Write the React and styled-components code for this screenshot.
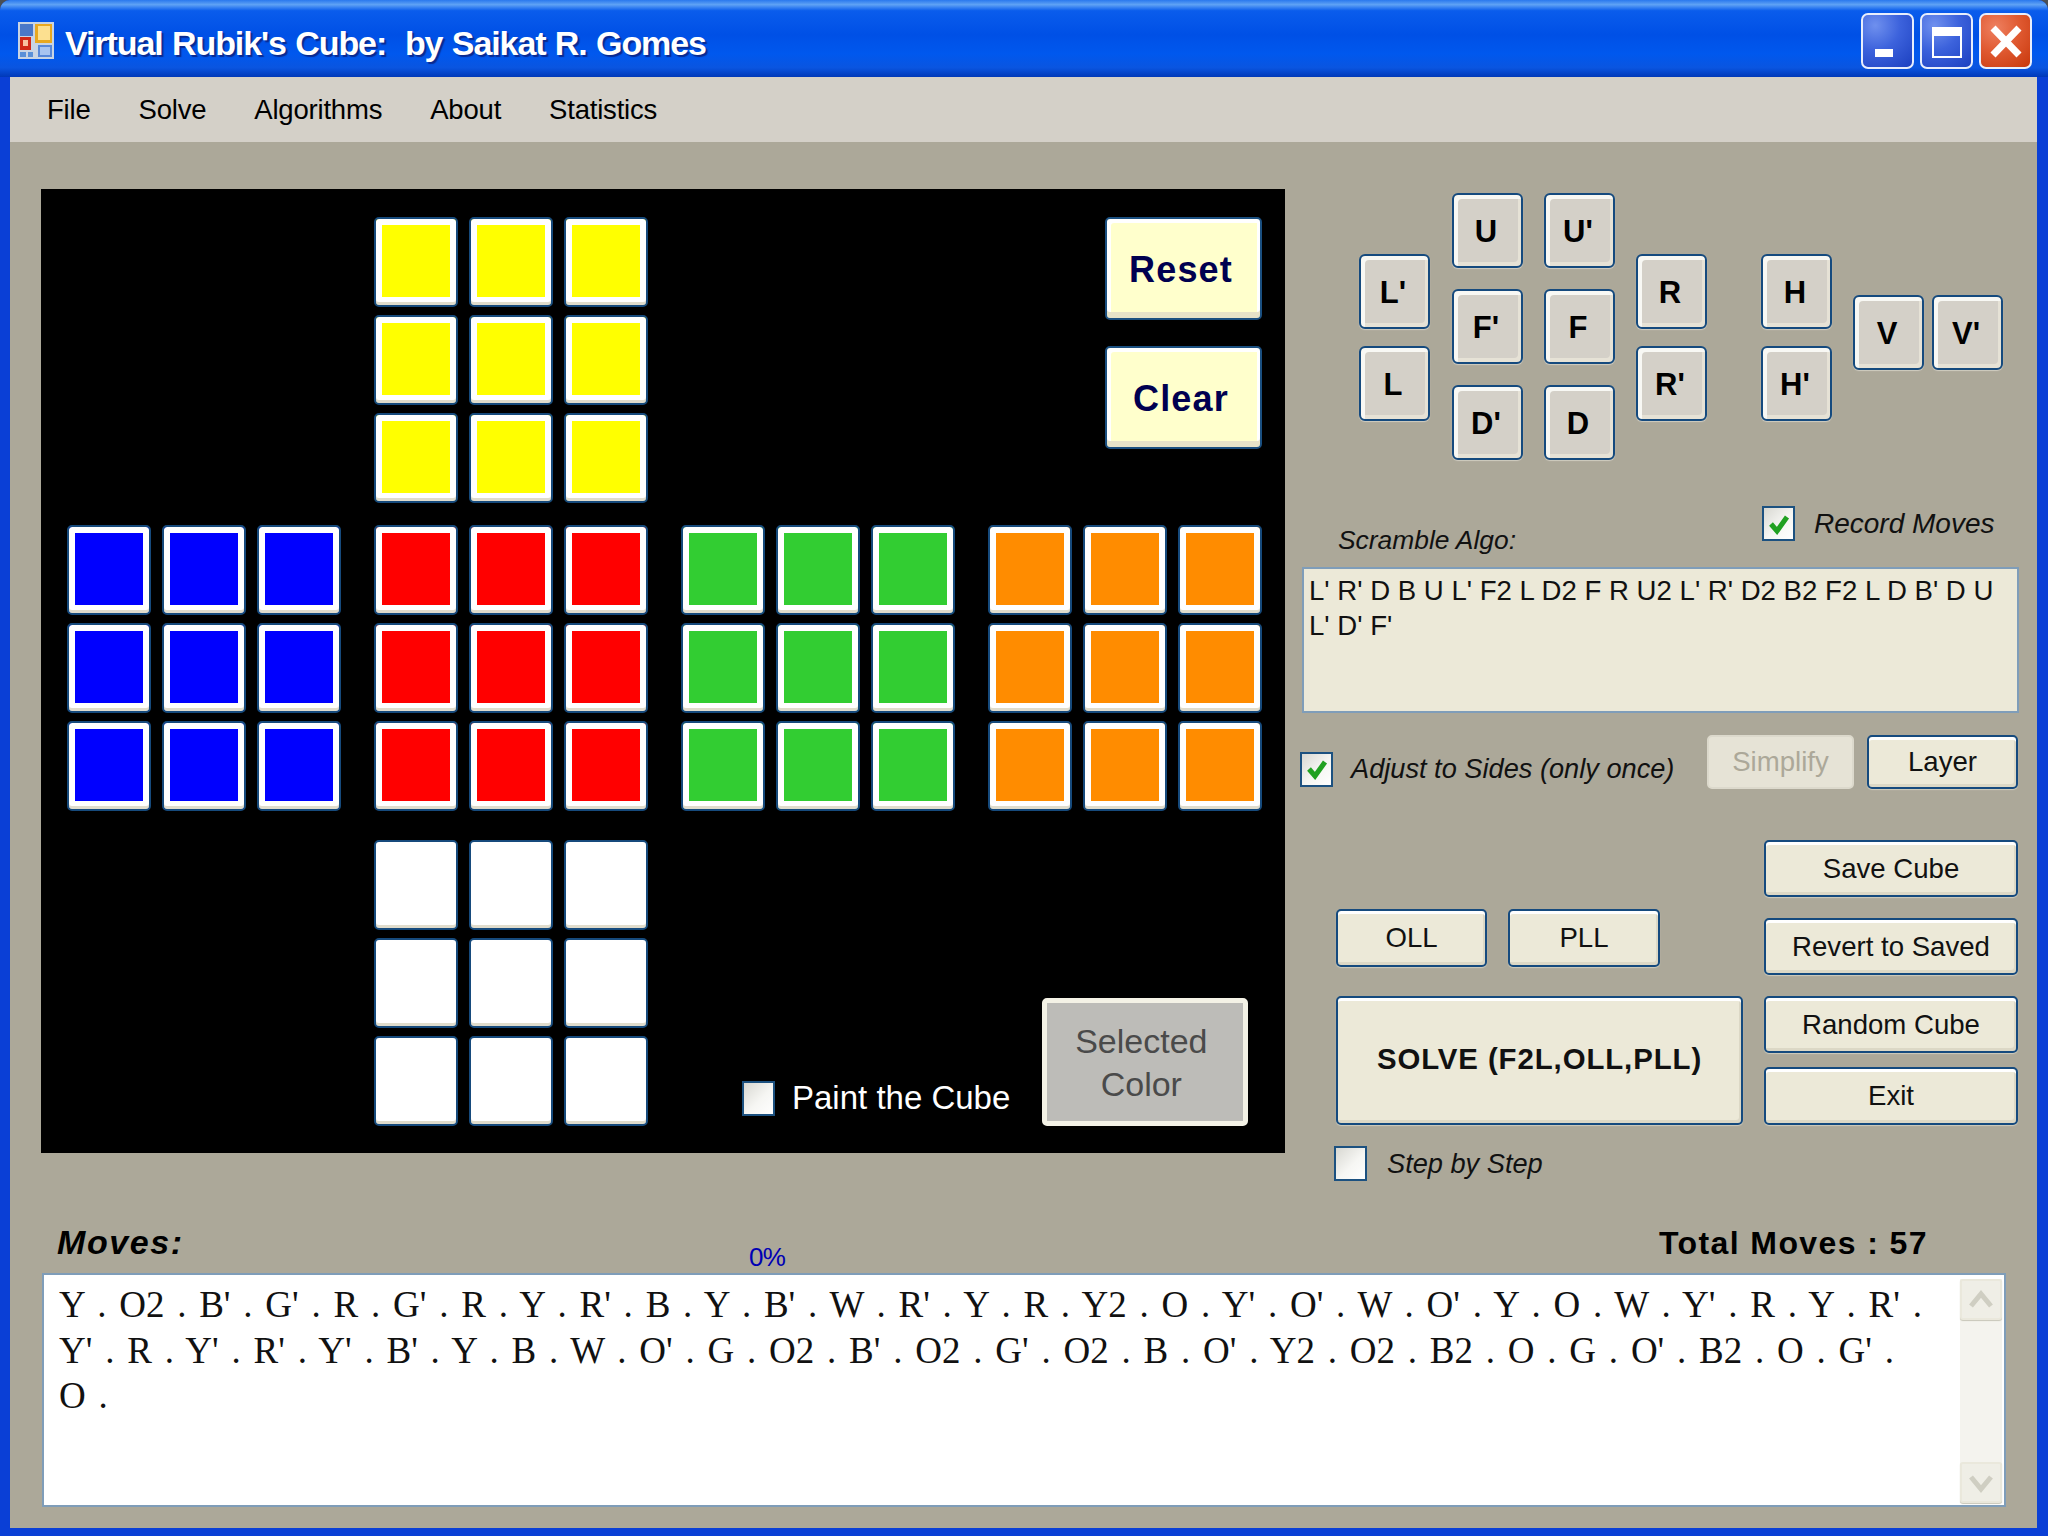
import React from 'react';
import styled, { createGlobalStyle } from 'styled-components';

const Global = createGlobalStyle`
  html, body { margin: 0; padding: 0; background: #4a4f55; }
  * { box-sizing: border-box; }
`;
const sans = `"Liberation Sans", Arial, sans-serif`;
const serif = `"Liberation Serif", "Times New Roman", serif`;

const Win = styled.div`
  width: 2048px; height: 1536px; overflow: hidden;
  display: flex; flex-direction: column;
  background: #0a3fd6; border-radius: 10px 10px 0 0;
  font-family: ${sans}; color: #000;
`;
const TitleBar = styled.div`
  height: 77px; flex: none; display: flex; align-items: center;
  padding: 0 16px 0 18px;
  background: linear-gradient(180deg, #2a78ee 0%, #5fa2f5 6%, #0a5cec 14%, #0050e6 45%, #0058ee 70%, #0a55e0 88%, #0038b8 100%);
`;
const TitleIcon = styled.svg`
  width: 36px; height: 37px; flex: none; margin-top: 3px;
`;
const TitleText = styled.div`
  margin-left: 11px; flex: 1; padding-top: 9px; font-size: 34px; font-weight: 700; color: #fff;
  letter-spacing: -1.08px; word-spacing: 1px; white-space: pre; text-shadow: 2px 2px 1px #0a2a90;
`;
const WinBtns = styled.div`
  display: flex; gap: 6px; margin-top: 5px; margin-right: 0;
`;
const WinBtn = styled.button`
  width: 53px; height: 56px; padding: 0; display: flex; align-items: center; justify-content: center;
  border: 2px solid #e8eefc; border-radius: 7px;
  background: ${p => p.$close
    ? 'radial-gradient(circle at 30% 25%, #ee8060 0%, #e05a32 45%, #c8380c 100%)'
    : 'radial-gradient(circle at 25% 20%, #6f90ee 0%, #3c62dc 45%, #1c40c0 100%)'};
`;
const Client = styled.div`
  flex: 1; margin: 0 11px 8px 10px; display: flex; flex-direction: column;
  background: #aca899;
`;
const MenuBar = styled.nav`
  height: 65px; flex: none; display: flex; align-items: center; gap: 48px;
  padding: 0 0 0 37px; background: #d4d0c8; font-size: 27.5px; letter-spacing: -0.2px;
`;
const Main = styled.div`
  height: 1084px; flex: none; display: flex; padding: 47px 0 0 31px;
`;
const CubePanel = styled.div`
  width: 1244px; height: 964px; flex: none; background: #000;
  padding: 28px 0 0 26px;
`;
const Net = styled.div`
  display: grid;
  grid-template-columns: 273px 273px 273px 274px;
  column-gap: 34px;
  grid-template-rows: 287px 288px 288px;
  row-gap: 21px;
`;
const Face = styled.div`
  display: grid; grid-template-columns: repeat(3, 84px); grid-auto-rows: 90px;
  column-gap: 11px; row-gap: 8px; grid-column: ${p => p.$col}; grid-row: ${p => p.$row};
  margin-top: ${p => p.$row === 3 ? 6 : 0}px;
`;
const Tile = styled.button`
  padding: 0; border: 2px solid #164a7c; border-radius: 5px; background: ${p => p.$color};
  box-shadow: inset 0 -3px 0 #e0dccc, inset 0 0 0 6px #fff, inset 0 -8px 0 #fff;
`;
const ActionStack = styled.div`
  grid-column: 4; grid-row: 1; display: flex; flex-direction: column; align-items: flex-end; gap: 26px;
`;
const YellowBtn = styled.button`
  width: 157px; height: 103px; padding: 3px 5px 0 0; border: 2px solid #1a4f80; border-radius: 5px;
  background: #ffffcc; color: #000050; font: 700 36px ${sans}; letter-spacing: 1.2px;
  box-shadow: inset 0 -6px 0 #e6e2c8, inset 4px 4px 0 #fff, inset -3px 0 0 #fff;
`;
const PaintArea = styled.div`
  grid-column: 3 / 5; grid-row: 3; display: flex; align-items: flex-end;
  margin: 33px 0 -4px 61px;
`;
const PaintCheck = styled.label`
  display: flex; align-items: center; gap: 17px; color: #fff; font-size: 33px; margin-bottom: 9px;
  white-space: nowrap;
`;
const Swatch = styled.div`
  width: 206px; height: 128px; margin-left: 32px; flex: none;
  display: flex; align-items: center; justify-content: center; text-align: center;
  background: #bdbcb8; border: 5px solid #f4f2e6; border-radius: 5px;
  color: #4a4a4a; font-size: 34px; line-height: 43px; padding: 2px 8px 0 0;
`;
const Box = styled.span`
  width: 33px; height: 35px; flex: none; display: flex; align-items: center; justify-content: center;
  border: 2px solid #1c5180;
  background: linear-gradient(135deg, #d8d8d2 0%, #f6f6f3 55%, #ffffff 100%);
`;
const Side = styled.div`
  flex: 1; display: flex; flex-direction: column; padding-top: 4px;
`;
const Pad = styled.div`
  display: flex; height: 269px; padding-left: 74px; flex: none;
`;
const KeyCol = styled.div`
  display: flex; flex-direction: column;
  margin-top: ${p => p.$top || 0}px; margin-left: ${p => p.$left || 0}px;
  gap: ${p => p.$gap || 0}px;
`;
const Key = styled.button`
  width: 71px; height: 75px; padding: 3px 3px 0 0; border: 2px solid #154a7e; border-radius: 6px;
  background: #d4d0c8; font: 700 31px ${sans}; color: #000;
  box-shadow: inset 4px 4px 0 #f8f8f4, inset -3px -4px 0 #e6e2d6, 0 1px 1px #d0ccc0;
`;
const ScrambleRow = styled.div`
  display: flex; height: 61px; flex: none; margin-top: 44px; padding-left: 53px;
`;
const ScrambleLabel = styled.div`
  width: 424px; flex: none; margin-top: 19px; font-style: italic; font-size: 26.4px; line-height: 30px;
  color: #111;
`;
const ItalicCheck = styled.label`
  display: flex; align-items: center; gap: ${p => p.$gap || 19}px; font-style: italic;
  font-size: ${p => p.$size || 27.2}px;
  color: #111; white-space: nowrap; height: 35px;
`;
const AlgoBox = styled.div`
  width: 717px; height: 146px; flex: none; margin-left: 17px; padding: 4px 5px;
  background: #ece9d8; border: 2px solid #7f9db9; font-size: 27.6px; line-height: 35px; color: #111;
`;
const OptionsRow = styled.div`
  display: flex; align-items: center; margin-top: 22px; margin-left: 15px; height: 54px; flex: none;
`;
const AdjustWrap = styled.div`
  width: 407px; flex: none; padding-top: 14px; display: flex;
`;
const Btn = styled.button`
  width: ${p => p.$w}px; height: ${p => p.$h || 57}px; flex: none;
  padding: 0 0 ${p => p.$bold ? 3 : 0}px;
  margin-left: ${p => p.$ml || 0}px;
  border: 2px solid #154a7e; border-radius: 5px; background: #ece9d8;
  font: ${p => p.$bold ? 700 : 400} ${p => p.$bold ? 29.4 : 27.6}px ${sans}; color: #111;
  letter-spacing: ${p => p.$bold ? 0.9 : 0}px;
  box-shadow: inset 0 3px 0 #fff, inset -2px -3px 0 #dcd8c6, 0 1px 1px #cfcbbc;
  white-space: nowrap;
`;
const DisabledBtn = styled(Btn)`
  border-color: #dcd9cc; color: #aca899; background: #e6e3d6;
  box-shadow: none;
`;
const Lower = styled.div`
  display: flex; margin-top: 51px; margin-left: 51px; flex: none;
`;
const LeftCol = styled.div`
  width: 428px; flex: none; display: flex; flex-direction: column; padding-top: 69px;
`;
const PairRow = styled.div`
  display: flex; gap: 21px; margin-bottom: 29px;
`;
const StepWrap = styled.div`
  margin-top: 21px; margin-left: -2px;
`;
const RightCol = styled.div`
  display: flex; flex-direction: column;
`;
const RightBtn = styled(Btn)`
  margin-bottom: ${p => p.$mb || 0}px;
`;
const Bottom = styled.div`
  flex: 1; padding: 0 0 0 32px; display: flex; flex-direction: column;
`;
const MovesHeader = styled.div`
  height: 47px; flex: none; display: flex;
`;
const MovesTitle = styled.div`
  width: 126px; flex: none; padding: 0 0 0 15px; white-space: nowrap;
  font: italic 700 34px/32px ${sans}; letter-spacing: 1.6px;
`;
const Percent = styled.div`
  margin-left: 581px; margin-top: 17px; color: #0000b4; font-size: 26px; line-height: 28px; letter-spacing: -0.8px;
`;
const Total = styled.div`
  margin-left: auto; margin-right: 109px; font: 700 32px/34px ${sans}; letter-spacing: 1.4px; white-space: nowrap;
`;
const MovesBox = styled.div`
  width: 1964px; height: 234px; flex: none; display: flex;
  background: #fff; border: 2px solid #7f9db9;
`;
const MovesText = styled.div`
  flex: 1; padding: 7px 0 0 15px; font: 37px/45.5px ${serif}; color: #111; white-space: nowrap;
  word-spacing: 3.53px;
`;
const Scroll = styled.div`
  width: 42px; flex: none; margin: 4px 2px 2px 0; display: flex; flex-direction: column;
  justify-content: space-between; background: #f4f3ee;
`;
const ScrollBtn = styled.div`
  height: 41px; display: flex; align-items: center; justify-content: center;
  background: #efeee6; border: 2px solid #eae8dc; border-radius: 3px; box-shadow: 0 1px 1px #c8c6b8;
`;

const faces = [
  { color: '#ffff00', col: 2, row: 1 },
  { color: '#0000ff', col: 1, row: 2 },
  { color: '#ff0000', col: 2, row: 2 },
  { color: '#32cd32', col: 3, row: 2 },
  { color: '#ff8c00', col: 4, row: 2 },
  { color: '#ffffff', col: 2, row: 3 },
];
const Check = () => (
  <svg width="22" height="22" viewBox="0 0 22 22">
    <path d="M3 11 L9 18 L19 4" fill="none" stroke="#21a121" strokeWidth="5" />
  </svg>
);
const Chevron = ({ down }) => (
  <svg width="28" height="22" viewBox="0 0 28 22">
    <path d={down ? 'M4 5 L14 17 L24 5' : 'M4 17 L14 5 L24 17'} fill="none" stroke="#cfcec2" strokeWidth="5" />
  </svg>
);

export default function App() {
  return (
    <Win>
      <Global />
      <TitleBar>
        <TitleIcon viewBox="0 0 36 37">
          <rect width="36" height="37" fill="#c8d4e4" />
          <rect x="2" y="2" width="13" height="12" fill="#4a78c8" />
          <rect x="2" y="15" width="11" height="13" fill="#d02818" />
          <rect x="5" y="18" width="5" height="6" fill="#f8c0a0" />
          <rect x="17" y="2" width="17" height="19" fill="#e8a820" />
          <rect x="20" y="4" width="12" height="14" fill="#fce090" />
          <rect x="2" y="30" width="6" height="5" fill="#5a90d8" />
          <rect x="10" y="30" width="5" height="5" fill="#5a90d8" />
          <rect x="20" y="23" width="14" height="12" fill="#5888d8" />
          <rect x="22" y="25" width="10" height="8" fill="#a8c4f0" />
        </TitleIcon>
        <TitleText>Virtual Rubik's Cube:  by Saikat R. Gomes</TitleText>
        <WinBtns>
          <WinBtn aria-label="Minimize">
            <svg width="46" height="50" viewBox="0 0 46 50"><rect x="10" y="33" width="18" height="8" fill="#fff" /></svg>
          </WinBtn>
          <WinBtn aria-label="Maximize">
            <svg width="46" height="50" viewBox="0 0 46 50">
              <rect x="9" y="12" width="28" height="29" fill="none" stroke="#fff" strokeWidth="2" />
              <rect x="9" y="12" width="28" height="8" fill="#fff" />
            </svg>
          </WinBtn>
          <WinBtn $close aria-label="Close">
            <svg width="46" height="50" viewBox="0 0 46 50">
              <path d="M10 12 L36 39 M36 12 L10 39" stroke="#fff" strokeWidth="7" />
            </svg>
          </WinBtn>
        </WinBtns>
      </TitleBar>
      <Client>
        <MenuBar>
          <span>File</span><span>Solve</span><span>Algorithms</span><span>About</span><span>Statistics</span>
        </MenuBar>
        <Main>
          <CubePanel>
            <Net>
              {faces.map(f => (
                <Face key={f.color} $col={f.col} $row={f.row}>
                  {Array.from({ length: 9 }, (_, i) => <Tile key={i} $color={f.color} />)}
                </Face>
              ))}
              <ActionStack>
                <YellowBtn>Reset</YellowBtn>
                <YellowBtn>Clear</YellowBtn>
              </ActionStack>
              <PaintArea>
                <PaintCheck><Box />Paint the Cube</PaintCheck>
                <Swatch>Selected<br />Color</Swatch>
              </PaintArea>
            </Net>
          </CubePanel>
          <Side>
            <Pad>
              <KeyCol $top={61} $gap={17}><Key>L'</Key><Key>L</Key></KeyCol>
              <KeyCol $left={22} $gap={21}><Key>U</Key><Key>F'</Key><Key>D'</Key></KeyCol>
              <KeyCol $left={21} $gap={21}><Key>U'</Key><Key>F</Key><Key>D</Key></KeyCol>
              <KeyCol $left={21} $top={61} $gap={17}><Key>R</Key><Key>R'</Key></KeyCol>
              <KeyCol $left={54} $top={61} $gap={17}><Key>H</Key><Key>H'</Key></KeyCol>
              <KeyCol $left={21} $top={102}><Key>V</Key></KeyCol>
              <KeyCol $left={8} $top={102}><Key>V'</Key></KeyCol>
            </Pad>
            <ScrambleRow>
              <ScrambleLabel>Scramble Algo:</ScrambleLabel>
              <ItalicCheck $size={28}><Box><Check /></Box>Record Moves</ItalicCheck>
            </ScrambleRow>
            <AlgoBox>L' R' D B U L' F2 L D2 F R U2 L' R' D2 B2 F2 L D B' D U<br />L' D' F'</AlgoBox>
            <OptionsRow>
              <AdjustWrap><ItalicCheck $gap={18}><Box><Check /></Box>Adjust to Sides (only once)</ItalicCheck></AdjustWrap>
              <DisabledBtn $w={147} $h={54}>Simplify</DisabledBtn>
              <Btn $w={151} $h={54} $ml={13}>Layer</Btn>
            </OptionsRow>
            <Lower>
              <LeftCol>
                <PairRow>
                  <Btn $w={151} $h={58}>OLL</Btn>
                  <Btn $w={152} $h={58}>PLL</Btn>
                </PairRow>
                <Btn $w={407} $h={129} $bold>SOLVE (F2L,OLL,PLL)</Btn>
                <StepWrap><ItalicCheck $gap={20}><Box />Step by Step</ItalicCheck></StepWrap>
              </LeftCol>
              <RightCol>
                <RightBtn $w={254} $mb={21}>Save Cube</RightBtn>
                <RightBtn $w={254} $mb={21}>Revert to Saved</RightBtn>
                <RightBtn $w={254} $mb={14}>Random Cube</RightBtn>
                <RightBtn $w={254} $h={58}>Exit</RightBtn>
              </RightCol>
            </Lower>
          </Side>
        </Main>
        <Bottom>
          <MovesHeader>
            <MovesTitle>Moves:</MovesTitle>
            <Percent>0%</Percent>
            <Total>Total Moves : 57</Total>
          </MovesHeader>
          <MovesBox>
            <MovesText>
              <div>Y . O2 . B' . G' . R . G' . R . Y . R' . B . Y . B' . W . R' . Y . R . Y2 . O . Y' . O' . W . O' . Y . O . W . Y' . R . Y . R' .</div>
              <div>Y' . R . Y' . R' . Y' . B' . Y . B . W . O' . G . O2 . B' . O2 . G' . O2 . B . O' . Y2 . O2 . B2 . O . G . O' . B2 . O . G' .</div>
              <div>O .</div>
            </MovesText>
            <Scroll>
              <ScrollBtn><Chevron /></ScrollBtn>
              <ScrollBtn><Chevron down /></ScrollBtn>
            </Scroll>
          </MovesBox>
        </Bottom>
      </Client>
    </Win>
  );
}
